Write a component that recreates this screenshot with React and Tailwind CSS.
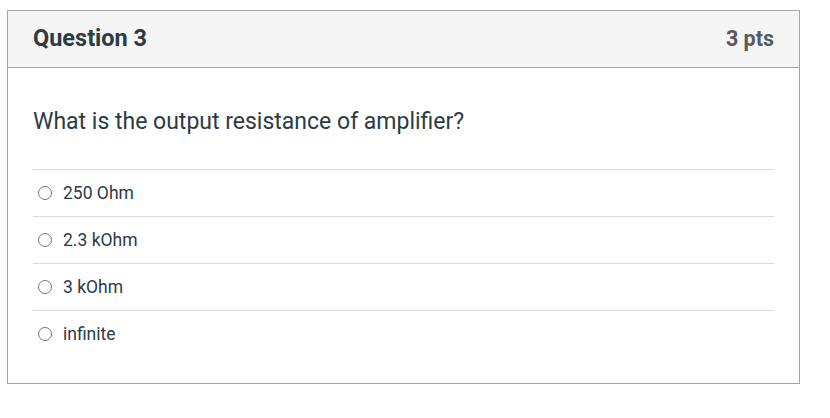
const options = ['250 Ohm', '2.3 kOhm', '3 kOhm', 'infinite'];

export default function App() {
  return (
    <div className="min-h-screen bg-white pt-[10px] pl-[7px]" style={{ fontFamily: 'Roboto, "Liberation Sans", sans-serif' }}>
      <div className="w-[793px] border border-[#a5a5a5] bg-white">
        {/* Header */}
        <div className="flex h-[57px] items-center justify-between border-b border-[#a5a5a5] bg-[#f5f5f5] px-[25px]">
          <h2 className="text-[23.5px] font-bold text-[#2d3b45]">Question 3</h2>
          <span className="text-[21.5px] font-bold text-[#565b60]">3 pts</span>
        </div>

        {/* Body */}
        <div className="px-[25px] pt-[39px] pb-[26px]">
          <p className="mb-[33px] text-[23px] leading-[29px] text-[#2d3b45]">
            What is the output resistance of amplifier?
          </p>
          <div>
            {options.map((opt) => (
              <label key={opt} className="flex h-[47px] items-center border-t border-[#dcdcdc] pl-[5px] text-[17.5px] text-[#2d3b45]">
                <span className="mr-[11px] h-[14px] w-[14px] rounded-full border border-[#767676] bg-white" />
                {opt}
              </label>
            ))}
          </div>
        </div>
      </div>
    </div>
  );
}
